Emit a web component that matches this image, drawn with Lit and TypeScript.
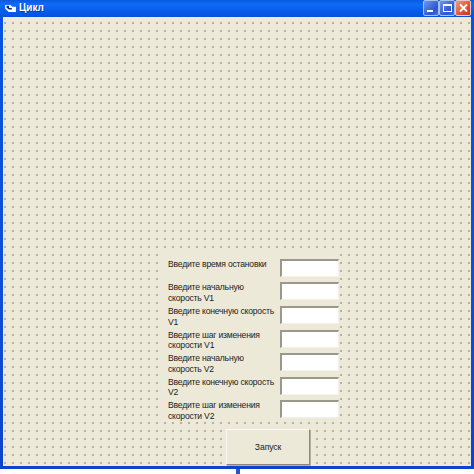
import { LitElement, html, css, svg } from "lit";
import { customElement } from "lit/decorators.js";

const labels = [
  ["Введите время остановки"],
  ["Введите начальную", "скорость V1"],
  ["Введите конечную скорость", "V1"],
  ["Введите шаг изменения", "скорости V1"],
  ["Введите начальную", "скорость V2"],
  ["Введите конечную скорость", "V2"],
  ["Введите шаг изменения", "скорости V2"],
];

@customElement("app-root")
export class AppRoot extends LitElement {
  static styles = css`
    :host { display: block; width: 474px; height: 474px; background: #fff; font-family: "Liberation Sans", Arial, sans-serif; overflow: hidden; }
    .window { height: 469px; box-sizing: border-box; background: linear-gradient(180deg, #0a5ce6 0, #0553e2 16px, #0c4fd8 60%, #0c44cc 100%); display: flex; flex-direction: column; padding: 0 3px 3px; }
    .title { height: 17px; flex: none; display: flex; align-items: flex-start; background: linear-gradient(180deg, #0a58dc 0, #0f6cf5 4px, #0759e8 12px, #0552e0 17px); margin: 0 -3px; padding: 0 3px 0 5px; box-sizing: border-box; }
    .app-icon { width: 11px; height: 9px; flex: none; margin-top: 4px; }
    .title-text { color: #fff; font-weight: 700; font-size: 10px; line-height: 16px; margin-left: 3px; flex: 1; text-shadow: 1px 1px 0 #0a3aa8; }
    .btns { display: flex; align-items: flex-start; }
    .btn { width: 14px; height: 14px; border: 1px solid #a9c0ee; border-radius: 2px; background: linear-gradient(135deg, #6f97ea, #2a55d0 70%, #3f74e4); display: flex; align-items: center; justify-content: center; }
    .btn.close { border-color: #e8c8bc; background: linear-gradient(135deg, #ee9a7c, #d8492a 70%, #c23a1c); }
    .client { flex: 1; min-height: 0; background-color: #ece9d8; background-image: radial-gradient(circle at center, #8a887a 0.4px, rgba(138, 136, 122, 0.3) 0.9px, transparent 1.3px); background-size: 8px 8px; background-position: -3px 2px; display: flex; flex-direction: column; align-items: flex-start; justify-content: flex-end; border-left: 1px solid #f6f0e6; }
    .panel { width: 176px; margin-left: 160px; box-sizing: border-box; background: #ece9d8; padding: 6px 1px 2px 4px; display: grid; grid-template-columns: minmax(0, 1fr) 59px; grid-auto-rows: 18.6px; row-gap: 5px; }
    .label { font-size: 8.6px; line-height: 10.5px; letter-spacing: -0.2px; color: #1c1c1a; white-space: nowrap; }
    .input { width: 59px; height: 18px; box-sizing: border-box; background: #fff; border-top: 2px solid #9a988a; border-left: 2px solid #9a988a; border-right: 1px solid #f4f2e8; border-bottom: 1px solid #f4f2e8; }
    .run-wrap { padding: 8px 0 1px 222px; display: flex; }
    .run { width: 84px; height: 36px; box-sizing: border-box; background: #ece9d8; border: 1px solid; border-color: #fbfaf4 #8a887c #8a887c #fbfaf4; box-shadow: 1px 1px 0 #b4b2a3; font: 8.6px "Liberation Sans", Arial, sans-serif; letter-spacing: -0.1px; color: #1c1c1a; padding: 0; }
    .tick { width: 4px; height: 5px; background: #2a56c0; margin-left: 236px; }
  `;

  render() {
    return html`
      <div class="window">
        <div class="title">
          <svg class="app-icon" viewBox="0 0 12 10">
            <path d="M0 1h6l2 2h4v6H4L0 5z" fill="#fff"/>
            <path d="M1.5 2h3v2.5h3V6H4L1.5 4z" fill="#12306e"/>
          </svg>
          <span class="title-text">Цикл</span>
          <div class="btns">
            <div class="btn">
              <svg width="11" height="12" viewBox="0 0 11 12">
                ${svg`<rect x="1" y="8" width="6" height="2" fill="#fff"/>`}
              </svg>
            </div>
            <div class="btn">
              <svg width="11" height="12" viewBox="0 0 11 12">
                ${svg`<path d="M1 2h9v8H1z M2 4v5h7V4z" fill="#fff" fill-rule="evenodd"/>`}
              </svg>
            </div>
            <div class="btn close">
              <svg width="11" height="12" viewBox="0 0 11 12">
                ${svg`<path d="M2 2.5l7 7M9 2.5l-7 7" stroke="#fff" stroke-width="1.8"/>`}
              </svg>
            </div>
          </div>
        </div>
        <div class="client">
          <div class="panel">
            ${labels.map(
              (l) => html`<div class="label">${l.map((t) => html`<div>${t}</div>`)}</div><div class="input"></div>`
            )}
          </div>
          <div class="run-wrap"><button class="run">Запуск</button></div>
        </div>
      </div>
      <div class="tick"></div>
    `;
  }
}
